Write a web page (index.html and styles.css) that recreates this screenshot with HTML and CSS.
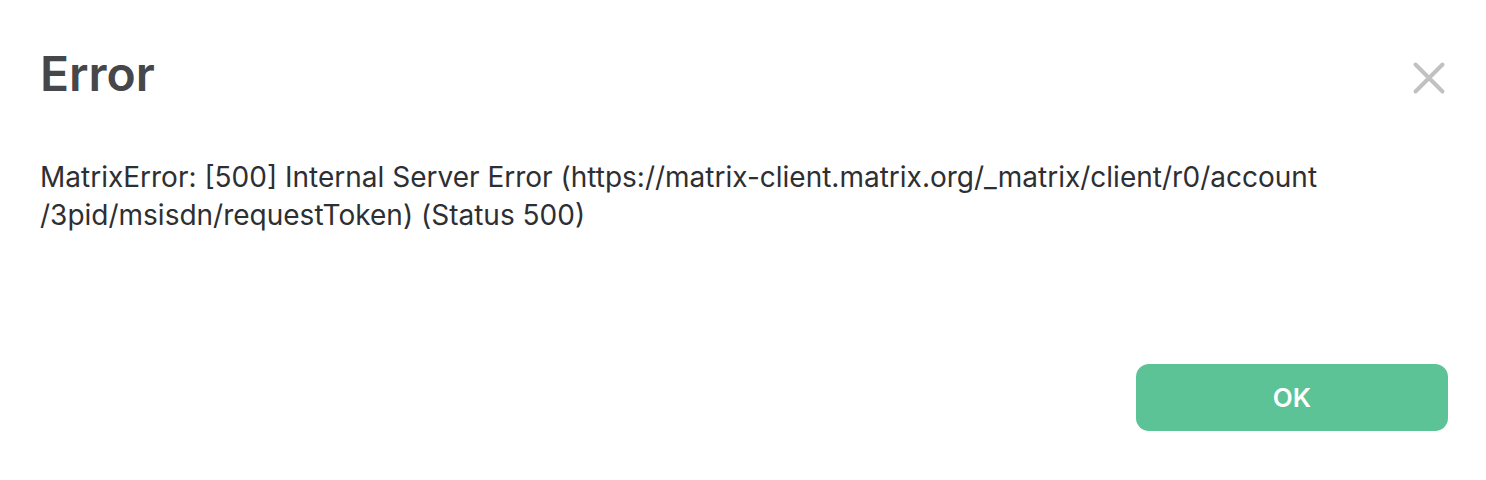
FILE: index.html
```html
<!DOCTYPE html>
<html lang="en">
<head>
<meta charset="utf-8">
<title>Error</title>
<link rel="stylesheet" href="styles.css">
</head>
<body>
<div class="dialog">
  <div class="header">
    <h1 class="title">Error</h1>
    <button class="close" aria-label="Close">
      <svg width="34" height="34" viewBox="0 0 34 34"><path d="M3.5 3.5 L30.5 30.5 M30.5 3.5 L3.5 30.5" stroke="#c1c1c1" stroke-width="4" stroke-linecap="round" fill="none"/></svg>
    </button>
  </div>
  <div class="content">MatrixError: [500] Internal Server Error (https://matrix-client.matrix.org/_matrix/client/r0/account<br>/3pid/msisdn/requestToken) (Status 500)</div>
  <div class="buttons">
    <button class="ok">OK</button>
  </div>
</div>
</body>
</html>
```

FILE: styles.css
```css
html, body {
  margin: 0;
  padding: 0;
  background: #ffffff;
}
body {
  font-family: Inter, "Noto Sans", sans-serif;
}
.dialog {
  padding: 36px 38px 0 40px;
  display: flex;
  flex-direction: column;
}
.header {
  display: flex;
  justify-content: space-between;
  align-items: center;
  height: 76px;
}
.title {
  margin: 0;
  font-size: 48px;
  font-weight: 600;
  color: #45474a;
  line-height: 76px;
}
.close {
  border: 0;
  background: none;
  padding: 0;
  margin: 8px 2px 0 0;
  width: 34px;
  height: 34px;
}
.close svg { display: block; }
.content {
  margin-top: 46px;
  font-size: 28px;
  line-height: 38px;
  color: #2e2f32;
}
.buttons {
  display: flex;
  justify-content: flex-end;
  margin-top: 130px;
}
.ok {
  width: 312px;
  height: 67px;
  border: 0;
  border-radius: 13px;
  background: #5cc397;
  color: #ffffff;
  font-family: Inter, "Noto Sans", sans-serif;
  font-size: 26px;
  font-weight: 600;
}
```
